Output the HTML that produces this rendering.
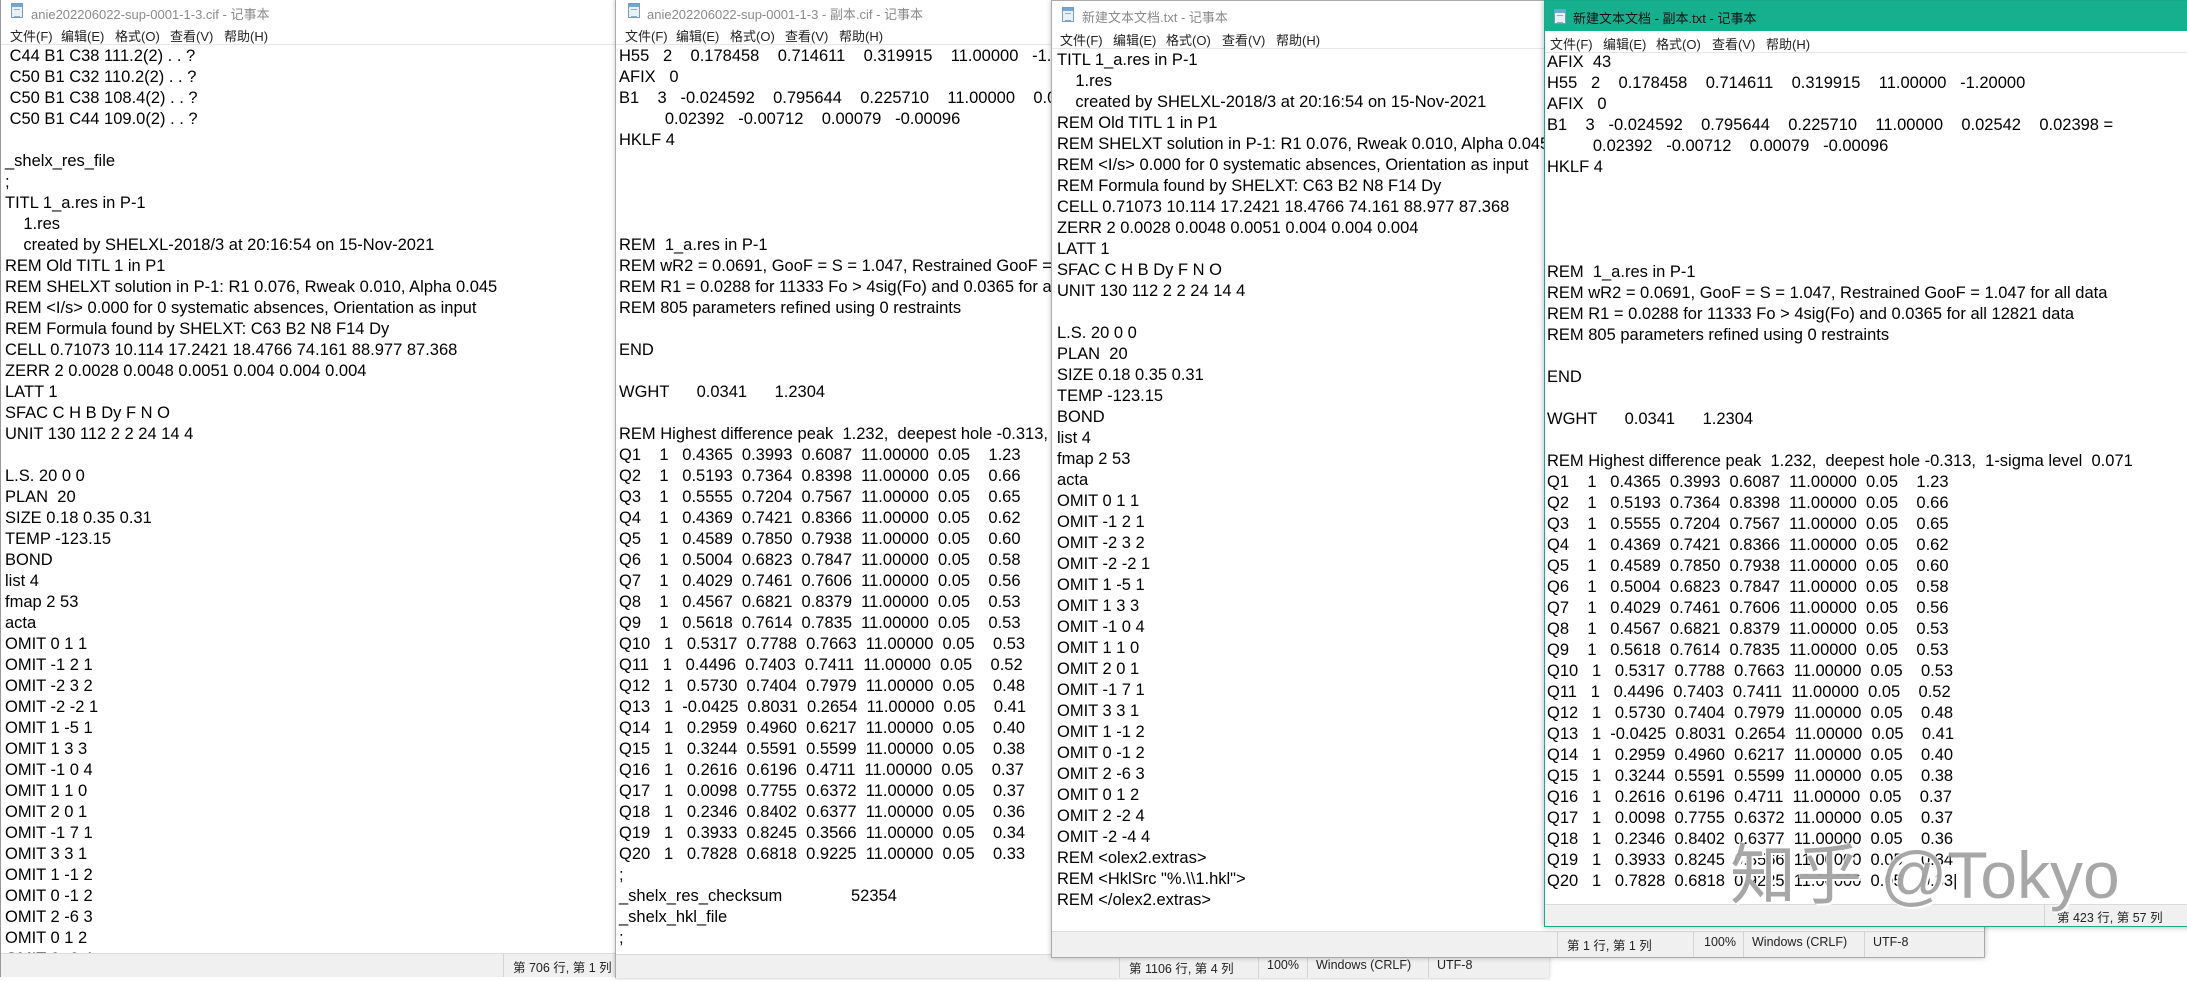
<!DOCTYPE html>
<html><head><meta charset="utf-8">
<style>
html,body{margin:0;padding:0;width:2187px;height:981px;overflow:hidden;background:#fff;}
.win{position:absolute;background:#fff;overflow:hidden;box-sizing:border-box;}
.title{position:absolute;left:0;top:0;right:0;height:24px;font:13px "Liberation Sans","Noto Sans CJK SC",sans-serif;color:#8a8a8a;white-space:nowrap;}
.title span{position:absolute;top:4px;}
.ico{position:absolute;top:3px;width:12px;height:15px;background:linear-gradient(#6fa8d6 0 3px,#e8f1f8 3px);border:1px solid #7a9cb8;box-sizing:border-box;}
.ico:after{content:"";position:absolute;left:2px;right:2px;top:5px;height:6px;border-top:1px solid #9ab;border-bottom:1px solid #9ab;}
.menu{position:absolute;left:0;right:0;height:20px;font:13px "Liberation Sans","Noto Sans CJK SC",sans-serif;color:#222;white-space:nowrap;border-bottom:1px solid #e6e6e6;}
.menu span{position:absolute;top:2px;}
pre{position:absolute;margin:0;font:16.5px/21px "Liberation Sans",sans-serif;color:#000;white-space:pre;}
.sb{position:absolute;left:0;right:0;bottom:0;background:#f0f0f0;border-top:1px solid #dadada;font:12.5px "Liberation Sans","Noto Sans CJK SC",sans-serif;color:#222;white-space:nowrap;}
.sb span{position:absolute;top:3px;}
.sb i{position:absolute;top:0;bottom:0;width:1px;background:#d4d4d4;}
</style></head><body>

<!-- Window 1 -->
<div class="win" style="left:0;top:0;width:640px;height:977px;border-left:1px solid #999;">
  <div class="title"><div class="ico" style="left:10px"></div><span style="left:30px">anie202206022-sup-0001-1-3.cif - 记事本</span></div>
  <div class="menu" style="top:24px"><span style="left:9px">文件(F)</span><span style="left:60px">编辑(E)</span><span style="left:114px">格式(O)</span><span style="left:169px">查看(V)</span><span style="left:223px">帮助(H)</span></div>
<pre style="left:4px;top:46px"> C44 B1 C38 111.2(2) . . ?
 C50 B1 C32 110.2(2) . . ?
 C50 B1 C38 108.4(2) . . ?
 C50 B1 C44 109.0(2) . . ?

_shelx_res_file
;
TITL 1_a.res in P-1
    1.res
    created by SHELXL-2018/3 at 20:16:54 on 15-Nov-2021
REM Old TITL 1 in P1
REM SHELXT solution in P-1: R1 0.076, Rweak 0.010, Alpha 0.045
REM &lt;I/s&gt; 0.000 for 0 systematic absences, Orientation as input
REM Formula found by SHELXT: C63 B2 N8 F14 Dy
CELL 0.71073 10.114 17.2421 18.4766 74.161 88.977 87.368
ZERR 2 0.0028 0.0048 0.0051 0.004 0.004 0.004
LATT 1
SFAC C H B Dy F N O
UNIT 130 112 2 2 24 14 4

L.S. 20 0 0
PLAN  20
SIZE 0.18 0.35 0.31
TEMP -123.15
BOND
list 4
fmap 2 53
acta
OMIT 0 1 1
OMIT -1 2 1
OMIT -2 3 2
OMIT -2 -2 1
OMIT 1 -5 1
OMIT 1 3 3
OMIT -1 0 4
OMIT 1 1 0
OMIT 2 0 1
OMIT -1 7 1
OMIT 3 3 1
OMIT 1 -1 2
OMIT 0 -1 2
OMIT 2 -6 3
OMIT 0 1 2
OMIT 2 -2 4</pre>
  <div class="sb" style="height:23px"><i style="left:502px"></i><span style="left:512px">第 706 行, 第 1 列</span></div>
</div>

<!-- Window 2 -->
<div class="win" style="left:615px;top:0;width:934px;height:978px;border-left:1px solid #aaa;box-shadow:0 0 4px rgba(0,0,0,.25);">
  <div class="title"><div class="ico" style="left:12px"></div><span style="left:31px">anie202206022-sup-0001-1-3 - 副本.cif - 记事本</span></div>
  <div class="menu" style="top:24px"><span style="left:9px">文件(F)</span><span style="left:60px">编辑(E)</span><span style="left:114px">格式(O)</span><span style="left:169px">查看(V)</span><span style="left:223px">帮助(H)</span></div>
<pre style="left:3px;top:46px">H55   2    0.178458    0.714611    0.319915    11.00000   -1.20000
AFIX   0
B1    3   -0.024592    0.795644    0.225710    11.00000    0.02542    0.02398 =
          0.02392   -0.00712    0.00079   -0.00096
HKLF 4




REM  1_a.res in P-1
REM wR2 = 0.0691, GooF = S = 1.047, Restrained GooF = 1.047 for all data
REM R1 = 0.0288 for 11333 Fo &gt; 4sig(Fo) and 0.0365 for all 12821 data
REM 805 parameters refined using 0 restraints

END

WGHT      0.0341      1.2304

REM Highest difference peak  1.232,  deepest hole -0.313,  1-sigma level  0.071
Q1    1   0.4365  0.3993  0.6087  11.00000  0.05    1.23
Q2    1   0.5193  0.7364  0.8398  11.00000  0.05    0.66
Q3    1   0.5555  0.7204  0.7567  11.00000  0.05    0.65
Q4    1   0.4369  0.7421  0.8366  11.00000  0.05    0.62
Q5    1   0.4589  0.7850  0.7938  11.00000  0.05    0.60
Q6    1   0.5004  0.6823  0.7847  11.00000  0.05    0.58
Q7    1   0.4029  0.7461  0.7606  11.00000  0.05    0.56
Q8    1   0.4567  0.6821  0.8379  11.00000  0.05    0.53
Q9    1   0.5618  0.7614  0.7835  11.00000  0.05    0.53
Q10   1   0.5317  0.7788  0.7663  11.00000  0.05    0.53
Q11   1   0.4496  0.7403  0.7411  11.00000  0.05    0.52
Q12   1   0.5730  0.7404  0.7979  11.00000  0.05    0.48
Q13   1  -0.0425  0.8031  0.2654  11.00000  0.05    0.41
Q14   1   0.2959  0.4960  0.6217  11.00000  0.05    0.40
Q15   1   0.3244  0.5591  0.5599  11.00000  0.05    0.38
Q16   1   0.2616  0.6196  0.4711  11.00000  0.05    0.37
Q17   1   0.0098  0.7755  0.6372  11.00000  0.05    0.37
Q18   1   0.2346  0.8402  0.6377  11.00000  0.05    0.36
Q19   1   0.3933  0.8245  0.3566  11.00000  0.05    0.34
Q20   1   0.7828  0.6818  0.9225  11.00000  0.05    0.33
;
_shelx_res_checksum               52354
_shelx_hkl_file
;</pre>
  <div class="sb" style="height:23px"><i style="left:503px"></i><span style="left:513px">第 1106 行, 第 4 列</span><i style="left:642px"></i><span style="left:651px">100%</span><i style="left:691px"></i><span style="left:700px">Windows (CRLF)</span><i style="left:812px"></i><span style="left:821px">UTF-8</span></div>
</div>

<!-- Window 3 -->
<div class="win" style="left:1051px;top:0;width:934px;height:958px;border:1px solid #aaa;box-shadow:0 0 5px rgba(0,0,0,.25);">
  <div class="title"><div class="ico" style="left:10px;top:6px"></div><span style="left:30px;top:6px">新建文本文档.txt - 记事本</span></div>
  <div class="menu" style="top:27px"><span style="left:8px">文件(F)</span><span style="left:61px">编辑(E)</span><span style="left:114px">格式(O)</span><span style="left:170px">查看(V)</span><span style="left:224px">帮助(H)</span></div>
<pre style="left:5px;top:49px">TITL 1_a.res in P-1
    1.res
    created by SHELXL-2018/3 at 20:16:54 on 15-Nov-2021
REM Old TITL 1 in P1
REM SHELXT solution in P-1: R1 0.076, Rweak 0.010, Alpha 0.045
REM &lt;I/s&gt; 0.000 for 0 systematic absences, Orientation as input
REM Formula found by SHELXT: C63 B2 N8 F14 Dy
CELL 0.71073 10.114 17.2421 18.4766 74.161 88.977 87.368
ZERR 2 0.0028 0.0048 0.0051 0.004 0.004 0.004
LATT 1
SFAC C H B Dy F N O
UNIT 130 112 2 2 24 14 4

L.S. 20 0 0
PLAN  20
SIZE 0.18 0.35 0.31
TEMP -123.15
BOND
list 4
fmap 2 53
acta
OMIT 0 1 1
OMIT -1 2 1
OMIT -2 3 2
OMIT -2 -2 1
OMIT 1 -5 1
OMIT 1 3 3
OMIT -1 0 4
OMIT 1 1 0
OMIT 2 0 1
OMIT -1 7 1
OMIT 3 3 1
OMIT 1 -1 2
OMIT 0 -1 2
OMIT 2 -6 3
OMIT 0 1 2
OMIT 2 -2 4
OMIT -2 -4 4
REM &lt;olex2.extras&gt;
REM &lt;HklSrc "%.\\1.hkl"&gt;
REM &lt;/olex2.extras&gt;</pre>
  <div class="sb" style="height:25px"><i style="left:505px"></i><span style="left:515px">第 1 行, 第 1 列</span><i style="left:641px"></i><span style="left:652px">100%</span><i style="left:691px"></i><span style="left:700px">Windows (CRLF)</span><i style="left:812px"></i><span style="left:821px">UTF-8</span></div>
</div>

<!-- Window 4 -->
<div class="win" style="left:1544px;top:0;width:650px;height:927px;border:1px solid #1aa88a;box-shadow:0 0 6px rgba(0,0,0,.3);">
  <div class="title" style="height:30px;background:#17b08e;color:#111;"><div class="ico" style="left:9px;top:8px"></div><span style="left:28px;top:7px">新建文本文档 - 副本.txt - 记事本</span></div>
  <div class="menu" style="top:31px"><span style="left:5px">文件(F)</span><span style="left:58px">编辑(E)</span><span style="left:111px">格式(O)</span><span style="left:167px">查看(V)</span><span style="left:221px">帮助(H)</span></div>
<pre style="left:2px;top:51px">AFIX  43
H55   2    0.178458    0.714611    0.319915    11.00000   -1.20000
AFIX   0
B1    3   -0.024592    0.795644    0.225710    11.00000    0.02542    0.02398 =
          0.02392   -0.00712    0.00079   -0.00096
HKLF 4




REM  1_a.res in P-1
REM wR2 = 0.0691, GooF = S = 1.047, Restrained GooF = 1.047 for all data
REM R1 = 0.0288 for 11333 Fo &gt; 4sig(Fo) and 0.0365 for all 12821 data
REM 805 parameters refined using 0 restraints

END

WGHT      0.0341      1.2304

REM Highest difference peak  1.232,  deepest hole -0.313,  1-sigma level  0.071
Q1    1   0.4365  0.3993  0.6087  11.00000  0.05    1.23
Q2    1   0.5193  0.7364  0.8398  11.00000  0.05    0.66
Q3    1   0.5555  0.7204  0.7567  11.00000  0.05    0.65
Q4    1   0.4369  0.7421  0.8366  11.00000  0.05    0.62
Q5    1   0.4589  0.7850  0.7938  11.00000  0.05    0.60
Q6    1   0.5004  0.6823  0.7847  11.00000  0.05    0.58
Q7    1   0.4029  0.7461  0.7606  11.00000  0.05    0.56
Q8    1   0.4567  0.6821  0.8379  11.00000  0.05    0.53
Q9    1   0.5618  0.7614  0.7835  11.00000  0.05    0.53
Q10   1   0.5317  0.7788  0.7663  11.00000  0.05    0.53
Q11   1   0.4496  0.7403  0.7411  11.00000  0.05    0.52
Q12   1   0.5730  0.7404  0.7979  11.00000  0.05    0.48
Q13   1  -0.0425  0.8031  0.2654  11.00000  0.05    0.41
Q14   1   0.2959  0.4960  0.6217  11.00000  0.05    0.40
Q15   1   0.3244  0.5591  0.5599  11.00000  0.05    0.38
Q16   1   0.2616  0.6196  0.4711  11.00000  0.05    0.37
Q17   1   0.0098  0.7755  0.6372  11.00000  0.05    0.37
Q18   1   0.2346  0.8402  0.6377  11.00000  0.05    0.36
Q19   1   0.3933  0.8245  0.3566  11.00000  0.05    0.34
Q20   1   0.7828  0.6818  0.9225  11.00000  0.05    0.33|</pre>
  <div class="sb" style="height:21px"><i style="left:499px"></i><span style="left:512px;top:2px">第 423 行, 第 57 列</span></div>
</div>

<!-- watermark -->
<div style="position:absolute;left:1730px;top:842px;font:66px/1 'Liberation Sans','Noto Sans CJK SC',sans-serif;color:rgba(130,130,130,.7);text-shadow:2px 2px 0 #fff,-1px -1px 0 rgba(255,255,255,.8);white-space:nowrap;">知乎 @Tokyo</div>

</body></html>
